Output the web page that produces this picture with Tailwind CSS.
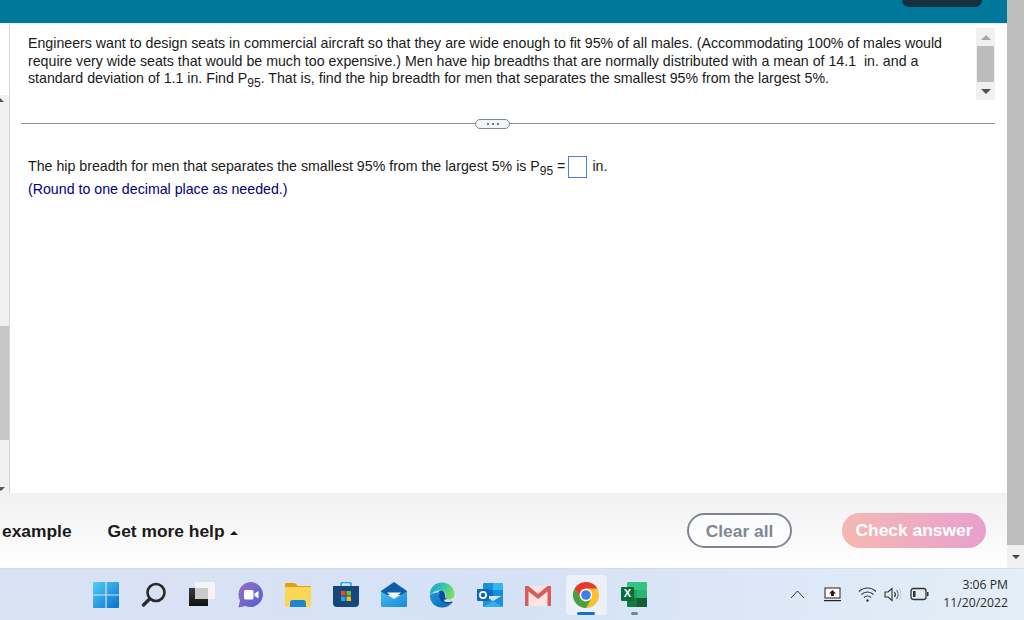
<!DOCTYPE html>
<html lang="en">
<head>
    <meta charset="UTF-8">
    <title>Question</title>
    <script src="https://cdn.jsdelivr.net/npm/@tailwindcss/browser@4"></script>
</head>
<body class="bg-white overflow-hidden font-['Liberation_Sans',Arial,sans-serif]">
<div class="flex flex-col w-[1024px] h-[620px]">
    <div class="flex flex-1 min-h-0">
        <div class="flex flex-col flex-1 min-w-0">
            <!-- Top bar -->
            <div class="h-[23px] shrink-0 bg-[#00789c] flex justify-end pr-[25px]">
                <div class="w-[80px] h-[7px] bg-[#17303f] rounded-b-[14px]"></div>
            </div>
            <div class="flex flex-1 min-h-0 flex-col">
                <div class="flex flex-1 min-h-0">
                    <!-- Left scrollbar -->
                    <div class="w-[10px] shrink-0 border-r border-[#d4d4d4] flex flex-col">
                        <div class="h-[72px] bg-white"></div>
                        <div class="flex-1 bg-[#f0f0f0] flex flex-col">
                            <div class="h-[9px] flex items-center"><div class="w-0 h-0 border-x-[4px] border-x-transparent border-b-[4px] border-b-[#555] -ml-[4px]"></div></div>
                            <div class="h-[222px]"></div>
                            <div class="h-[114px] bg-[#c6c6c6]"></div>
                            <div class="flex-1"></div>
                            <div class="h-[9px] flex items-center"><div class="w-0 h-0 border-x-[4px] border-x-transparent border-t-[4px] border-t-[#555] -ml-[3px]"></div></div>
                        </div>
                    </div>
                    <!-- Question -->
                    <div class="flex-1 min-w-0 pl-[11px] pr-[12px] border-t border-[#e4eef2]">
                        <div class="flex h-[99px]">
                            <div class="flex-1 pl-[7px] pt-[11px] text-[14.2px] leading-[17.6px] text-[#1a1a1a]">
                                <p class="whitespace-nowrap">Engineers want to design seats in commercial aircraft so that they are wide enough to fit 95% of all males. (Accommodating 100% of males would</p>
                                <p class="whitespace-nowrap">require very wide seats that would be much too expensive.) Men have hip breadths that are normally distributed with a mean of 14.1&nbsp; in. and a</p>
                                <p class="whitespace-nowrap">standard deviation of 1.1 in. Find P<sub class="text-[12px] leading-none relative top-[4px] align-baseline">95</sub>. That is, find the hip breadth for men that separates the smallest 95% from the largest 5%.</p>
                            </div>
                            <!-- Inner scrollbar -->
                            <div class="w-[19px] h-[72px] mt-[4px] bg-[#f0f0f0] flex flex-col items-center">
                                <div class="h-[18px] flex items-center"><div class="w-0 h-0 border-x-[5px] border-x-transparent border-b-[5px] border-b-[#a6a6a6]"></div></div>
                                <div class="h-[36px] w-[17px] bg-[#bcbcbc]"></div>
                                <div class="flex-1 flex items-center"><div class="w-0 h-0 border-x-[5px] border-x-transparent border-t-[5px] border-t-[#505050]"></div></div>
                            </div>
                        </div>
                        <!-- Divider -->
                        <div class="relative h-px bg-[#8a929c]">
                            <div class="absolute left-[454px] -top-[4px] w-[35px] h-[10px] rounded-full border border-[#7d8794] bg-[#f4f5f7] flex items-center justify-center gap-[3px]">
                                <span class="w-[2px] h-[2px] bg-[#4a5260] rounded-full"></span>
                                <span class="w-[2px] h-[2px] bg-[#4a5260] rounded-full"></span>
                                <span class="w-[2px] h-[2px] bg-[#4a5260] rounded-full"></span>
                            </div>
                        </div>
                        <!-- Answer -->
                        <div class="pl-[7px] pt-[32px] text-[14.2px] text-[#1a1a1a]">
                            <div class="flex items-center h-[22px] whitespace-nowrap">
                                <span>The hip breadth for men that separates the smallest 95% from the largest 5% is P<sub class="text-[12px] leading-none relative top-[4px] align-baseline">95</sub> =</span>
                                <span class="ml-[3px] w-[19px] h-[22px] border border-[#4a7fdc] bg-white"></span>
                                <span class="ml-[5px]">in.</span>
                            </div>
                            <p class="mt-[3px] leading-[17px] text-[#000080]">(Round to one decimal place as needed.)</p>
                        </div>
                    </div>
                </div>
                <!-- Bottom action bar -->
                <div class="h-[75px] shrink-0 bg-gradient-to-b from-[#f1f1f1] to-white flex items-center pl-[2px] pr-[21px]">
                    <span class="mt-[2px] text-[17.400px] font-bold text-[#1a1a1a]">example</span>
                    <span class="mt-[2px] ml-[36px] text-[17.400px] font-bold text-[#1a1a1a]">Get more help</span>
                    <span class="ml-[5px] mt-[4px] w-0 h-0 border-x-[4px] border-x-transparent border-b-[4px] border-b-[#1a1a1a]"></span>
                    <button class="ml-auto w-[105px] h-[35px] pt-[1px] rounded-full border-2 border-[#7f8797] bg-white/60 text-[17.400px] font-bold text-[#7f8797]">Clear all</button>
                    <button class="ml-[50px] w-[144px] h-[35px] rounded-full bg-gradient-to-r from-[#f4b8b2] to-[#e8a0cc] text-[17.400px] font-bold text-white">Check answer</button>
                </div>
            </div>
        </div>
        <!-- Right scrollbar -->
        <div class="w-[17px] shrink-0 bg-[#f0f0f0] flex flex-col items-center">
            <div class="w-full h-[545px] bg-[#bdbdbd]"></div>
            <div class="flex-1 flex items-center"><div class="w-0 h-0 border-x-[4px] border-x-transparent border-t-[4px] border-t-[#404040]"></div></div>
        </div>
    </div>

    <!-- Taskbar -->
    <div class="relative h-[52px] shrink-0 border-t border-[#d5dceb] bg-gradient-to-r from-[#d9e2f3] via-[#d5e2f6] to-[#e3eef7] flex items-center gap-[22px] pl-[93px]">
        <!-- Start -->
        <svg class="w-[26px] h-[26px]" viewBox="0 0 26 26"><defs><linearGradient id="st" x1="0" y1="0" x2="1" y2="1"><stop offset="0" stop-color="#52d0fa"/><stop offset="1" stop-color="#0870cc"/></linearGradient></defs><path d="M1 0h11.400v12.400H0V1a1 1 0 0 1 1-1ZM13.600 0H25a1 1 0 0 1 1 1v11.400H13.600ZM0 13.600h12.400V26H1a1 1 0 0 1-1-1ZM13.600 13.600H26V25a1 1 0 0 1-1 1H13.600Z" fill="url(#st)"/></svg>
        <!-- Search -->
        <svg class="w-[26px] h-[26px]" viewBox="0 0 26 26" fill="none" stroke="#2a2a2a"><circle cx="15" cy="10.500" r="8.500" stroke-width="2.600"/><path d="M8.500 17 2.500 23" stroke-width="3.400" stroke-linecap="round"/></svg>
        <!-- Task view -->
        <svg class="w-[26px] h-[26px]" viewBox="0 0 26 26"><defs><linearGradient id="tv" x1="0" y1="0" x2="0" y2="1"><stop offset="0" stop-color="#3a3a3a"/><stop offset="1" stop-color="#111"/></linearGradient></defs><rect x="0" y="6" width="19" height="18" fill="url(#tv)"/><rect x="6" y="0" width="20" height="17" rx="1" fill="#f4f4f6"/><rect x="6" y="6" width="13" height="11" fill="#c9c9cb"/></svg>
        <!-- Teams chat -->
        <svg class="w-[26px] h-[26px]" viewBox="0 0 26 26"><defs><linearGradient id="ch" x1="0" y1="0" x2="1" y2="1"><stop offset="0" stop-color="#9a70c4"/><stop offset="1" stop-color="#4f5fd0"/></linearGradient></defs><path d="M13.500 0a12.500 12.500 0 1 1-5 24L1.500 25.500 3 18.500A12.500 12.500 0 0 1 13.500 0Z" fill="url(#ch)"/><rect x="7" y="8" width="9.500" height="9.500" rx="1.500" fill="#fff"/><path d="m17.500 11.500 4-2.500v7.500l-4-2.500Z" fill="#fff"/></svg>
        <!-- Explorer -->
        <svg class="w-[26px] h-[26px]" viewBox="0 0 26 26"><path d="M0 2a1 1 0 0 1 1-1h9l3 3h13v5H0Z" fill="#e0a010"/><path d="M0 5h26v19a1 1 0 0 1-1 1H1a1 1 0 0 1-1-1Z" fill="#fcd757"/><path d="M5 25v-4a3 3 0 0 1 3-3h10a3 3 0 0 1 3 3v4Z" fill="#1a86d0"/></svg>
        <!-- Store -->
        <svg class="w-[26px] h-[26px]" viewBox="0 0 26 26"><path d="M8 4V2a1.500 1.500 0 0 1 1.500-1.500h7A1.500 1.500 0 0 1 18 2v2" fill="none" stroke="#28a8e0" stroke-width="1.600"/><path d="M0 4h26v17a4 4 0 0 1-4 4H4a4 4 0 0 1-4-4Z" fill="#17467c"/><rect x="8" y="9" width="4.500" height="4.500" fill="#e8492c"/><rect x="13.500" y="9" width="4.500" height="4.500" fill="#6cbf2c"/><rect x="8" y="14.500" width="4.500" height="4.500" fill="#1ea6ea"/><rect x="13.500" y="14.500" width="4.500" height="4.500" fill="#fbb918"/></svg>
        <!-- Mail -->
        <svg class="w-[26px] h-[26px]" viewBox="0 0 26 26"><defs><linearGradient id="ml" x1="0" y1="0" x2="1" y2="1"><stop offset="0" stop-color="#44bdf2"/><stop offset="1" stop-color="#1a88d8"/></linearGradient></defs><path d="M0 9 13 0l13 9v4H0Z" fill="#0f5fa8"/><path d="M0 9.500 13 17l13-7.500V24a1 1 0 0 1-1 1H1a1 1 0 0 1-1-1Z" fill="url(#ml)"/><path d="M6 10.500h14l-7 6Z" fill="#fff"/></svg>
        <!-- Edge -->
        <svg class="w-[26px] h-[26px]" viewBox="0 0 26 26"><defs><linearGradient id="ed" x1="0" y1="0" x2="1" y2="0.300"><stop offset="0" stop-color="#1c9ad8"/><stop offset=".55" stop-color="#34c4b0"/><stop offset="1" stop-color="#78dc60"/></linearGradient><linearGradient id="eb" x1="0" y1="0" x2="1" y2="1"><stop offset="0" stop-color="#1a98dc"/><stop offset="1" stop-color="#0c62b8"/></linearGradient></defs><path d="M10.500 9c3-1.500 6 1 5.500 5.500 0 1.500 1.500 2.500 4 2.500 1.500 0 3 2 3.500 3.500-5.500 2.500-10.500 1.500-12.500-.5-3-3-3-8-.5-11Z" fill="#0a4a9c"/><path d="M13 .5c7 0 12.500 5.500 12.500 12 0 3-2.500 4.500-5.500 4.500-2.500 0-4-1-4-2.500 1-1.500 1-3.500-1-5-4-2.500-11-.5-14 3.500C.5 6 6 .5 13 .5Z" fill="url(#ed)"/><path d="M1 13c-.5 7 5 12.500 12 12.500 4 0 8-2 10.500-5-3.500 1.500-8.500 1-11-1.500-2.500-2.500-3-6-1.500-8.500-4 0-8 .5-10 2.500Z" fill="url(#eb)"/><ellipse cx="19" cy="18.600" rx="4" ry="1.500" fill="#d8e3f4"/></svg>
        <!-- Outlook -->
        <svg class="w-[26px] h-[26px]" viewBox="0 0 26 26"><rect x="6" y="1" width="20" height="13" rx="1" fill="#1a90d8"/><rect x="16" y="1" width="10" height="7" fill="#30b8f0"/><rect x="6" y="8" width="10" height="6" fill="#0f6cbc"/><path d="M6 13l10 6 10-6v11a1 1 0 0 1-1 1H7a1 1 0 0 1-1-1Z" fill="#1c90dc"/><path d="M6 25l10-6 10 6Z" fill="#38aee8"/><rect x="0" y="7" width="12" height="12" rx="1" fill="#0e66b4"/><circle cx="6" cy="13" r="3.100" fill="none" stroke="#fff" stroke-width="1.700"/></svg>
        <!-- Gmail -->
        <svg class="w-[26px] h-[26px]" viewBox="0 0 26 26"><rect x="0" y="4" width="26" height="20" fill="#fbe4e2"/><path d="M0 4h3.500L13 12l9.500-8H26v20h-3.500V9.500L13 17 3.500 9.500V24H0Z" fill="#d95c5c"/></svg>
        <!-- Chrome -->
        <div class="relative w-[26px] h-[26px]">
            <div class="absolute -left-[7px] -top-[7px] w-[41px] h-[40px] rounded-[4px] bg-[#ecf0f8]"></div>
            <svg class="relative w-[26px] h-[26px]" viewBox="0 0 26 26"><circle cx="13" cy="13" r="13" fill="#fbc02d"/><path d="M1.740 6.500A13 13 0 0 1 24.260 6.500H13A6.500 6.500 0 0 0 7.370 16.250Z" fill="#e53935"/><path d="M1.740 6.500 7.370 16.250A6.500 6.500 0 0 0 18.630 16.250L13 26A13 13 0 0 1 1.740 6.500Z" fill="#43a047"/><circle cx="13" cy="13" r="6.200" fill="#fff"/><circle cx="13" cy="13" r="4.800" fill="#3f7fe8"/></svg>
            <span class="absolute -bottom-[7px] left-[4px] w-[18px] h-[3px] rounded-full bg-[#1a6fc8]"></span>
        </div>
        <!-- Excel -->
        <div class="relative w-[26px] h-[26px]">
            <svg class="w-[26px] h-[26px]" viewBox="0 0 26 26"><rect x="6" y="0" width="20" height="8" rx="1" fill="#33c481"/><rect x="6" y="8" width="20" height="8" fill="#21a366"/><rect x="6" y="16" width="20" height="9" rx="1" fill="#107c41"/><rect x="16" y="8" width="10" height="8" fill="#2cb274"/><rect x="16" y="16" width="10" height="9" fill="#185c37"/><rect x="0" y="5" width="13" height="14" rx="1" fill="#0b6b3a"/></svg>
            <span class="absolute left-0 top-[5px] w-[13px] h-[14px] flex items-center justify-center text-[11px] font-bold text-white">X</span>
            <span class="absolute -bottom-[7px] left-[10px] w-[7px] h-[3px] rounded-full bg-[#7d8594]"></span>
        </div>

        <!-- Tray -->
        <svg class="absolute left-[790px] top-[20px] w-[15px] h-[10px]" viewBox="0 0 15 10" fill="none" stroke="#333" stroke-width="1"><path d="M1 9l6.500-7 6.500 7"/></svg>
        <svg class="absolute left-[824px] top-[18px] w-[17px] h-[15px]" viewBox="0 0 17 15"><rect x="1" y="1" width="15" height="10" fill="#fff" stroke="#222"/><path d="M8.500 3 12 6.500H10V9H7V6.500H5Z" fill="#222"/><rect x="0" y="13" width="17" height="1.200" fill="#222"/></svg>
        <svg class="absolute left-[858px] top-[17px] w-[19px] h-[16px]" viewBox="0 0 19 16" fill="none" stroke="#333" stroke-width="1.100"><path d="M1 5.500a12 12 0 0 1 17 0"/><path d="M3.500 8.500a8.500 8.500 0 0 1 12 0"/><path d="M6 11.500a5 5 0 0 1 7 0"/><circle cx="9.500" cy="14.500" r="1.200" fill="#333" stroke="none"/></svg>
        <svg class="absolute left-[884px] top-[18px] w-[18px] h-[15px]" viewBox="0 0 18 15" fill="none" stroke="#333" stroke-width="1.100"><path d="M1 5h3l4-3.500v12L4 10H1Z"/><path d="M10.500 5a4 4 0 0 1 0 5"/><path d="M12.500 3a7 7 0 0 1 0 9" stroke="#666"/><path d="M15 1.500a10 10 0 0 1 0 12" stroke="#ccc"/></svg>
        <svg class="absolute left-[910px] top-[18px] w-[19px] h-[14px]" viewBox="0 0 19 14"><rect x="1" y="1.500" width="15" height="11" rx="2.500" fill="none" stroke="#333" stroke-width="1.300"/><rect x="3" y="4" width="2.500" height="6" fill="#333"/><rect x="17" y="5" width="1.500" height="4" fill="#333"/></svg>
        <div class="absolute right-[16px] top-[7px] text-right text-[12.200px] leading-[18px] text-[#2a2a2a] font-['Open_Sans','Liberation_Sans',sans-serif]">
            <div>3:06 PM</div>
            <div>11/20/2022</div>
        </div>
    </div>
</div>
</body>
</html>
